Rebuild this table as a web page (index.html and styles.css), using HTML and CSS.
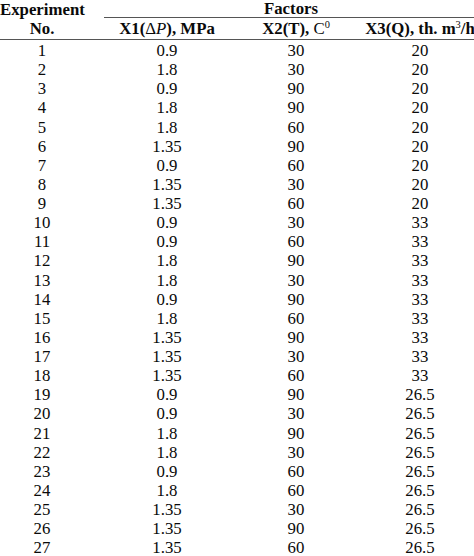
FILE: index.html
```html
<!DOCTYPE html>
<html>
<head>
<meta charset="utf-8">
<link rel="stylesheet" href="styles.css">
</head>
<body>
<table class="design">
  <colgroup>
    <col class="c-exp">
    <col class="c-gap">
    <col class="c-x1">
    <col class="c-x2">
    <col class="c-x3">
  </colgroup>
  <thead>
    <tr class="h1">
      <th rowspan="2" class="exp">Experiment<br>No.</th>
      <th class="gap"></th>
      <th colspan="3" class="factors">Factors</th>
    </tr>
    <tr class="h2">
      <th class="gap2"></th>
      <th class="sub">X1(<span class="reg">Δ</span><i class="it">P</i>), MPa</th>
      <th class="sub">X2(T), <span class="reg">C</span><sup>0</sup></th>
      <th class="sub">X3(Q), th. m<sup>3</sup>/h</th>
    </tr>
  </thead>
  <tbody>
    <tr><td>1</td><td></td><td>0.9</td><td>30</td><td>20</td></tr>
    <tr><td>2</td><td></td><td>1.8</td><td>30</td><td>20</td></tr>
    <tr><td>3</td><td></td><td>0.9</td><td>90</td><td>20</td></tr>
    <tr><td>4</td><td></td><td>1.8</td><td>90</td><td>20</td></tr>
    <tr><td>5</td><td></td><td>1.8</td><td>60</td><td>20</td></tr>
    <tr><td>6</td><td></td><td>1.35</td><td>90</td><td>20</td></tr>
    <tr><td>7</td><td></td><td>0.9</td><td>60</td><td>20</td></tr>
    <tr><td>8</td><td></td><td>1.35</td><td>30</td><td>20</td></tr>
    <tr><td>9</td><td></td><td>1.35</td><td>60</td><td>20</td></tr>
    <tr><td>10</td><td></td><td>0.9</td><td>30</td><td>33</td></tr>
    <tr><td>11</td><td></td><td>0.9</td><td>60</td><td>33</td></tr>
    <tr><td>12</td><td></td><td>1.8</td><td>90</td><td>33</td></tr>
    <tr><td>13</td><td></td><td>1.8</td><td>30</td><td>33</td></tr>
    <tr><td>14</td><td></td><td>0.9</td><td>90</td><td>33</td></tr>
    <tr><td>15</td><td></td><td>1.8</td><td>60</td><td>33</td></tr>
    <tr><td>16</td><td></td><td>1.35</td><td>90</td><td>33</td></tr>
    <tr><td>17</td><td></td><td>1.35</td><td>30</td><td>33</td></tr>
    <tr><td>18</td><td></td><td>1.35</td><td>60</td><td>33</td></tr>
    <tr><td>19</td><td></td><td>0.9</td><td>90</td><td>26.5</td></tr>
    <tr><td>20</td><td></td><td>0.9</td><td>30</td><td>26.5</td></tr>
    <tr><td>21</td><td></td><td>1.8</td><td>90</td><td>26.5</td></tr>
    <tr><td>22</td><td></td><td>1.8</td><td>30</td><td>26.5</td></tr>
    <tr><td>23</td><td></td><td>0.9</td><td>60</td><td>26.5</td></tr>
    <tr><td>24</td><td></td><td>1.8</td><td>60</td><td>26.5</td></tr>
    <tr><td>25</td><td></td><td>1.35</td><td>30</td><td>26.5</td></tr>
    <tr><td>26</td><td></td><td>1.35</td><td>90</td><td>26.5</td></tr>
    <tr><td>27</td><td></td><td>1.35</td><td>60</td><td>26.5</td></tr>
  </tbody>
</table>
</body>
</html>
```
FILE: styles.css
```css
html, body {
  margin: 0;
  padding: 0;
  background: #fff;
  overflow: hidden;
}
body {
  width: 474px;
  height: 556px;
}
.design {
  border-collapse: collapse;
  table-layout: fixed;
  width: 478px;
  font-family: "Liberation Serif", "Times New Roman", serif;
  font-size: 16.8px;
  color: #0a0a0a;
}
.c-exp { width: 84px; }
.c-gap { width: 20px; }
.c-x1 { width: 126px; }
.c-x2 { width: 132px; }
.c-x3 { width: 116px; }

.design th, .design td {
  padding: 0;
  text-align: center;
  white-space: nowrap;
}
.design th {
  font-weight: bold;
}
.h1 th {
  height: 17px;
  line-height: 17px;
  vertical-align: top;
}
.exp {
  line-height: 19px !important;
  vertical-align: top !important;
  border-bottom: 1px solid #555;
}
.factors {
  border-bottom: 1px solid #555;
}
.h2 th {
  height: 20px;
  line-height: 19px;
  vertical-align: top;
  padding-top: 1px;
  border-bottom: 1px solid #555;
}
.reg {
  font-weight: normal;
}
.it {
  font-weight: normal;
  font-style: italic;
}
sup {
  font-size: 0.62em;
  line-height: 0;
  vertical-align: 0.55em;
  font-weight: normal;
}
.design td {
  height: 19.12px;
  line-height: 19.12px;
}
.design tbody tr:first-child td {
  padding-top: 1px;
}
```
